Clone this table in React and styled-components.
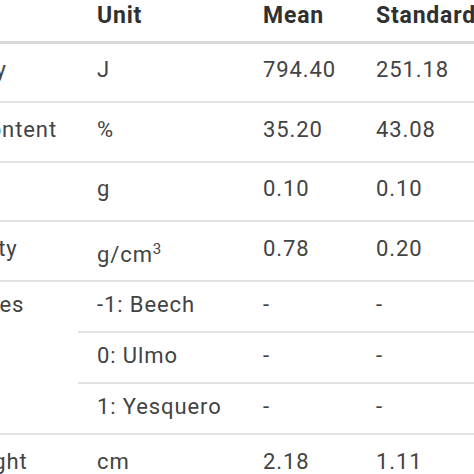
import React from 'react'
import styled, { createGlobalStyle } from 'styled-components'

const GlobalStyle = createGlobalStyle`
  html, body {
    margin: 0;
    padding: 0;
    background: #ffffff;
  }
`

const Viewport = styled.div`
  width: 474px;
  height: 474px;
  overflow: hidden;
  background: #ffffff;
  font-family: Roboto, 'Liberation Sans', sans-serif;
`

const Table = styled.table`
  margin-left: -143px;
  border-collapse: collapse;
  table-layout: fixed;
  width: 720px;
`

const HeadCell = styled.th`
  text-align: left;
  font-size: 23px;
  font-weight: 700;
  line-height: 24px;
  letter-spacing: 0.8px;
  color: #303030;
  padding: 3.5px 19px 13px;
  border-bottom: 3px solid #d9d9d9;
  white-space: nowrap;
`

const Cell = styled.td`
  text-align: left;
  vertical-align: top;
  font-size: 22px;
  font-weight: 400;
  line-height: 24px;
  letter-spacing: 0.9px;
  color: #434343;
  padding: ${({ $sub, $shift = 0 }) =>
    $sub ? `11px 19px 14.3px` : `${14.5 + $shift}px 19px ${19 - $shift}px`};
  border-bottom: 2px solid #e2e2e2;
  white-space: nowrap;
`

const Sup = styled.sup`
  font-size: 15px;
  line-height: 0;
`

const rows = [
  { name: 'Total energy', unit: 'J', mean: '794.40', sd: '251.18' },
  { name: 'Moisture content', unit: '%', mean: '35.20', sd: '43.08' },
  { name: 'Mass', unit: 'g', mean: '0.10', sd: '0.10' },
  {
    name: 'Basic density',
    unit: (
      <>
        g/cm<Sup>3</Sup>
      </>
    ),
    shift: 6,
    mean: '0.78',
    sd: '0.20',
  },
]

const species = ['-1: Beech', '0: Ulmo', '1: Yesquero']

export default function App() {
  return (
    <>
      <GlobalStyle />
      <Viewport>
        <Table>
          <colgroup>
            <col style={{ width: 221 }} />
            <col style={{ width: 166 }} />
            <col style={{ width: 113 }} />
            <col style={{ width: 220 }} />
          </colgroup>
          <thead>
            <tr>
              <HeadCell>Variable</HeadCell>
              <HeadCell>Unit</HeadCell>
              <HeadCell>Mean</HeadCell>
              <HeadCell>Standard deviation</HeadCell>
            </tr>
          </thead>
          <tbody>
            {rows.map((r) => (
              <tr key={r.name}>
                <Cell>{r.name}</Cell>
                <Cell $shift={r.shift}>{r.unit}</Cell>
                <Cell>{r.mean}</Cell>
                <Cell>{r.sd}</Cell>
              </tr>
            ))}
            {species.map((s, i) => (
              <tr key={s}>
                {i === 0 && (
                  <Cell $sub rowSpan={3}>
                    Wood species
                  </Cell>
                )}
                <Cell $sub>{s}</Cell>
                <Cell $sub>-</Cell>
                <Cell $sub>-</Cell>
              </tr>
            ))}
            <tr>
              <Cell>Sample height</Cell>
              <Cell>cm</Cell>
              <Cell>2.18</Cell>
              <Cell>1.11</Cell>
            </tr>
          </tbody>
        </Table>
      </Viewport>
    </>
  )
}
